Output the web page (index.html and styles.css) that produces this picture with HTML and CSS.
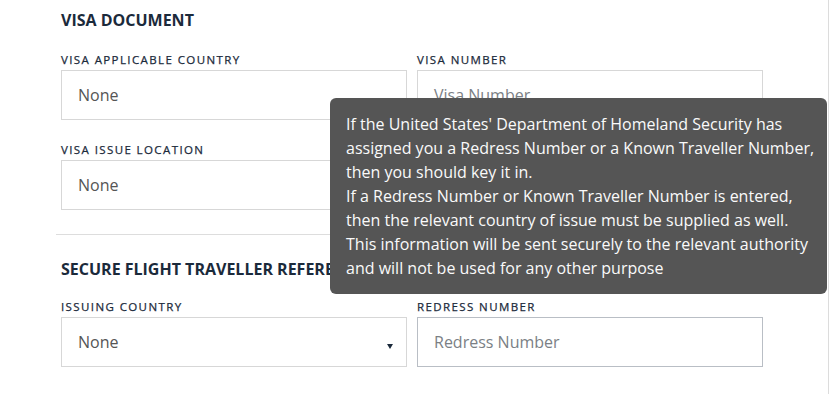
FILE: index.html
```html
<!DOCTYPE html>
<html lang="en">
<head>
<meta charset="utf-8">
<title>Visa document</title>
<link rel="stylesheet" href="styles.css">
</head>
<body>
<div class="page">
  <div class="content">
    <h2 class="section-title first">VISA DOCUMENT</h2>
    <div class="row">
      <div class="field">
        <div class="label">VISA APPLICABLE COUNTRY</div>
        <div class="box select"><span>None</span></div>
      </div>
      <div class="field">
        <div class="label">VISA NUMBER</div>
        <div class="box input placeholder">Visa Number</div>
      </div>
    </div>
    <div class="row second">
      <div class="field">
        <div class="label">VISA ISSUE LOCATION</div>
        <div class="box select"><span>None</span></div>
      </div>
    </div>
    <hr class="divider">
    <h2 class="section-title">SECURE FLIGHT TRAVELLER REFERENCE</h2>
    <div class="row third">
      <div class="field">
        <div class="label">ISSUING COUNTRY</div>
        <div class="box select"><span>None</span><i class="caret"></i></div>
      </div>
      <div class="field">
        <div class="label">REDRESS NUMBER</div>
        <div class="box input placeholder focus">Redress Number</div>
      </div>
    </div>
  </div>
  <div class="tooltip">If the United States' Department of Homeland Security has<br>assigned you a Redress Number or a Known Traveller Number,<br>then you should key it in.<br>If a Redress Number or Known Traveller Number is entered,<br>then the relevant country of issue must be supplied as well.<br>This information will be sent securely to the relevant authority<br>and will not be used for any other purpose</div>
</div>
</body>
</html>
```

FILE: styles.css
```css
html, body {
  margin: 0;
  padding: 0;
  background: #fff;
}
body {
  font-family: "Open Sans", "DejaVu Sans", sans-serif;
}
.page {
  position: relative;
  width: 828px;
  height: 394px;
  border-right: 1px solid #dcdcdc;
  overflow: hidden;
}
.content {
  width: 712px;
  padding: 8px 0 0 56px;
}
.section-title {
  margin: 22px 0 0;
  padding-left: 5px;
  font-size: 16px;
  line-height: 24px;
  font-weight: 700;
  color: #1b2a3b;
  white-space: nowrap;
}
.section-title.first {
  margin-top: 0;
}
.row {
  display: grid;
  grid-template-columns: 356px 356px;
  margin-top: 20px;
}
.row.second {
  margin-top: 22px;
}
.row.third {
  margin-top: 18px;
}
.field {
  padding: 0 5px;
}
.label {
  font-size: 11.5px;
  line-height: 16px;
  font-weight: 400;
  letter-spacing: 1.4px;
  color: #1b2a3b;
  -webkit-text-stroke: 0.25px #1b2a3b;
  margin-bottom: 2px;
  white-space: nowrap;
}
.box {
  box-sizing: border-box;
  height: 50px;
  border: 1px solid #d7d7d7;
  padding: 0 16px;
  display: flex;
  align-items: center;
  justify-content: space-between;
  font-size: 16px;
  color: #555;
}
.placeholder {
  color: #7b7f85;
}
.focus {
  border-color: #b9bec5;
}
.caret {
  width: 0;
  height: 0;
  margin-top: 8px;
  margin-right: -3px;
  border-left: 3px solid transparent;
  border-right: 3px solid transparent;
  border-top: 5px solid #1b2a3b;
}
.divider {
  margin: 24px 0 0;
  border: 0;
  border-top: 1px solid #dddddd;
  height: 0;
}
.tooltip {
  position: absolute;
  left: 330px;
  top: 98px;
  width: 497px;
  height: 196px;
  box-sizing: border-box;
  padding: 14px 16px;
  background: #555555;
  color: #fafafa;
  font-size: 16px;
  line-height: 24px;
  border-radius: 6px;
  white-space: nowrap;
}
```
